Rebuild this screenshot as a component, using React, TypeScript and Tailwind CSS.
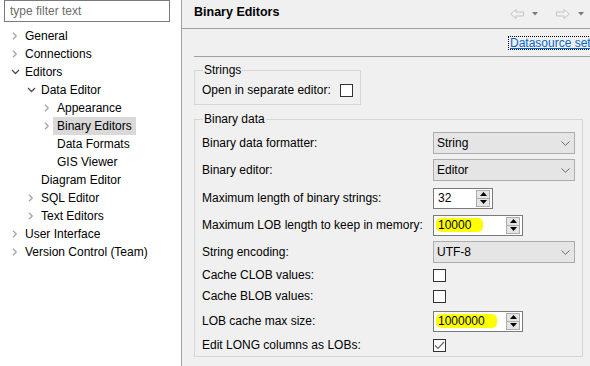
import type { ReactNode } from "react";

type TreeNode = {
  label: string;
  level: 0 | 1 | 2;
  arrow: "closed" | "open" | "none";
  selected?: boolean;
};

const tree: TreeNode[] = [
  { label: "General", level: 0, arrow: "closed" },
  { label: "Connections", level: 0, arrow: "closed" },
  { label: "Editors", level: 0, arrow: "open" },
  { label: "Data Editor", level: 1, arrow: "open" },
  { label: "Appearance", level: 2, arrow: "closed" },
  { label: "Binary Editors", level: 2, arrow: "closed", selected: true },
  { label: "Data Formats", level: 2, arrow: "none" },
  { label: "GIS Viewer", level: 2, arrow: "none" },
  { label: "Diagram Editor", level: 1, arrow: "none" },
  { label: "SQL Editor", level: 1, arrow: "closed" },
  { label: "Text Editors", level: 1, arrow: "closed" },
  { label: "User Interface", level: 0, arrow: "closed" },
  { label: "Version Control (Team)", level: 0, arrow: "closed" },
];

const indent = ["pl-[11px]", "pl-[27px]", "pl-[43px]"];

function TreeArrow({ kind }: { kind: TreeNode["arrow"] }) {
  if (kind === "none") return <span className="w-[10px]" />;
  if (kind === "open") {
    return (
      <svg width="10" height="8" viewBox="0 0 10 8" className="shrink-0">
        <polyline points="1,2 4.5,5.5 8,2" fill="none" stroke="#505050" strokeWidth="1.3" />
      </svg>
    );
  }
  return (
    <svg width="10" height="8" viewBox="0 0 10 8" className="shrink-0">
      <polyline points="2,0.8 5.2,4 2,7.2" fill="none" stroke="#a6a6a6" strokeWidth="1.3" />
    </svg>
  );
}

function Sidebar() {
  return (
    <aside className="w-[181px] shrink-0 bg-white">
      <div className="ml-[4px] flex h-[22px] w-[166px] items-center border border-[#7a7a7a] pl-[5px] text-[#6d6d6d]">
        type filter text
      </div>
      <ul className="mt-[5px]">
        {tree.map((node) => (
          <li key={node.label} className={`flex h-[18px] items-center ${indent[node.level]}`}>
            <TreeArrow kind={node.arrow} />
            <span className={`flex h-[18px] items-center whitespace-nowrap px-[4px] ${node.selected ? "bg-[#d9d9d9]" : ""}`}>
              {node.label}
            </span>
          </li>
        ))}
      </ul>
    </aside>
  );
}

function NavArrow({ dir }: { dir: "left" | "right" }) {
  const pts =
    dir === "left"
      ? "0.5,5 6,0.5 6,3 13.5,3 13.5,7 6,7 6,9.5"
      : "13.5,5 8,0.5 8,3 0.5,3 0.5,7 8,7 8,9.5";
  return (
    <svg width="14" height="10" viewBox="0 0 14 10">
      <polygon points={pts} fill="none" stroke="#c4c4c4" strokeWidth="1" strokeLinejoin="round" />
    </svg>
  );
}

function DropTriangle() {
  return (
    <svg width="6" height="4" viewBox="0 0 6 4">
      <polygon points="0,0 6,0 3,3.5" fill="#7a7a7a" />
    </svg>
  );
}

function Checkbox({ checked }: { checked?: boolean }) {
  return (
    <span className="flex h-[13px] w-[13px] items-center justify-center border border-[#333333] bg-white">
      {checked && (
        <svg width="11" height="9" viewBox="0 0 11 9">
          <polyline points="1,4.5 4,7.5 10,1" fill="none" stroke="#6a6a6a" strokeWidth="1.2" />
        </svg>
      )}
    </span>
  );
}

function Combo({ value }: { value: string }) {
  return (
    <div className="flex h-[22px] w-[142px] items-center justify-between border border-[#adadad] bg-[#e5e5e5] pl-[3px] pr-[4px]">
      <span>{value}</span>
      <svg width="9" height="5" viewBox="0 0 9 5">
        <polyline points="0.5,0.5 4.5,4.3 8.5,0.5" fill="none" stroke="#6a6a6a" strokeWidth="1" />
      </svg>
    </div>
  );
}

function Spinner({ value, wide, highlight }: { value: string; wide?: boolean; highlight?: boolean }) {
  return (
    <div className={`flex h-[21px] items-center border border-[#7a7a7a] bg-white ${wide ? "w-[90px]" : "w-[60px]"}`}>
      <span className="flex-1 pl-[2px]">
        <span className={`px-[2px] ${highlight ? "rounded-[5px] bg-[#ffff00] pr-[12px]" : ""}`}>{value}</span>
      </span>
      <div className="mr-[2px] flex h-[17px] w-[14px] flex-col border border-[#adadad] bg-[#e5e5e5]">
        <div className="flex flex-1 items-center justify-center border-b border-[#adadad]">
          <svg width="7" height="4" viewBox="0 0 7 4">
            <polygon points="0,4 7,4 3.5,0" fill="#000" />
          </svg>
        </div>
        <div className="flex flex-1 items-center justify-center">
          <svg width="7" height="4" viewBox="0 0 7 4">
            <polygon points="0,0 7,0 3.5,4" fill="#000" />
          </svg>
        </div>
      </div>
    </div>
  );
}

function Row({ label, className, children }: { label: string; className: string; children: ReactNode }) {
  return (
    <div className={`grid grid-cols-[231px_1fr] items-center ${className}`}>
      <span className="whitespace-nowrap">{label}</span>
      <div className="flex">{children}</div>
    </div>
  );
}

export default function App() {
  return (
    <div className="flex h-[366px] w-[590px] overflow-hidden font-['Liberation_Sans',Arial,sans-serif] text-[12px] leading-[15px] text-black">
      <Sidebar />
      <main className="min-w-0 flex-1 border-l border-[#a0a0a0] bg-[#f0f0f0]">
        <header className="flex h-[29px] items-center justify-between border-b border-[#a0a0a0] pb-[4px] pl-[12px] pr-[6px]">
          <h1 className="text-[12.5px] font-bold">Binary Editors</h1>
          <div className="flex items-center gap-[8px] pt-[3px]">
            <NavArrow dir="left" />
            <DropTriangle />
            <span className="w-[2px]" />
            <NavArrow dir="right" />
            <DropTriangle />
          </div>
        </header>

        <div className="mt-[7px] flex h-[14px] items-center overflow-hidden whitespace-nowrap pl-[326px]">
          <span className="border border-dotted border-black pl-[1px] leading-[12px] text-[#0066cc] underline">
            Datasource settings
          </span>
        </div>

        <div className="ml-[12px] mt-[6px] border-t border-[#a0a0a0]" />

        <fieldset className="ml-[12px] mt-[6px] w-[163px] border border-[#d5d5d5] px-[7px] pb-[7px]">
          <legend className="ml-[1px] px-[1px] leading-[15px]">Strings</legend>
          <div className="mt-[5px] flex h-[14px] items-center gap-[9px]">
            <span className="whitespace-nowrap">Open in separate editor:</span>
            <Checkbox />
          </div>
        </fieldset>

        <fieldset className="ml-[12px] mt-[7px] w-[388px] border border-[#d5d5d5] px-[7px] pb-[4px]">
          <legend className="ml-[1px] px-[1px] leading-[15px]">Binary data</legend>
          <Row label="Binary data formatter:" className="mt-[5px] h-[22px]">
            <Combo value="String" />
          </Row>
          <Row label="Binary editor:" className="mt-[5px] h-[22px]">
            <Combo value="Editor" />
          </Row>
          <Row label="Maximum length of binary strings:" className="mt-[6px] h-[22px]">
            <Spinner value="32" />
          </Row>
          <Row label="Maximum LOB length to keep in memory:" className="mt-[5px] h-[22px]">
            <Spinner value="10000" wide highlight />
          </Row>
          <Row label="String encoding:" className="mt-[5px] h-[22px]">
            <Combo value="UTF-8" />
          </Row>
          <Row label="Cache CLOB values:" className="mt-[5px] h-[14px]">
            <Checkbox />
          </Row>
          <Row label="Cache BLOB values:" className="mt-[7px] h-[14px]">
            <Checkbox />
          </Row>
          <Row label="LOB cache max size:" className="mt-[7px] h-[22px]">
            <Spinner value="1000000" wide highlight />
          </Row>
          <Row label="Edit LONG columns as LOBs:" className="mt-[6px] h-[14px]">
            <Checkbox checked />
          </Row>
        </fieldset>
      </main>
    </div>
  );
}
